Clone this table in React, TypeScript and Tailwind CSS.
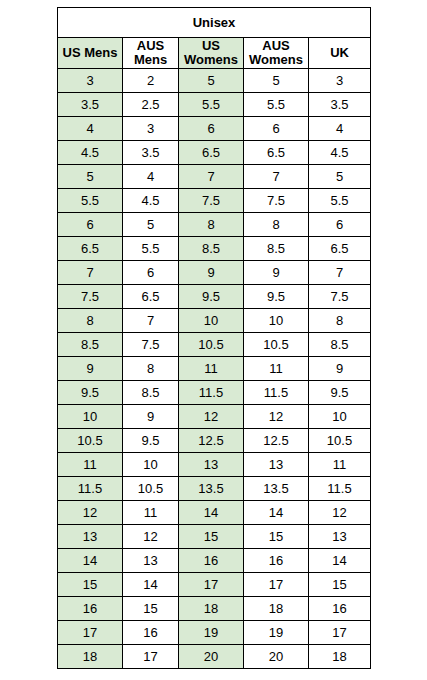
const ROWS: [string, string, string, string, string][] = [
  ["3", "2", "5", "5", "3"],
  ["3.5", "2.5", "5.5", "5.5", "3.5"],
  ["4", "3", "6", "6", "4"],
  ["4.5", "3.5", "6.5", "6.5", "4.5"],
  ["5", "4", "7", "7", "5"],
  ["5.5", "4.5", "7.5", "7.5", "5.5"],
  ["6", "5", "8", "8", "6"],
  ["6.5", "5.5", "8.5", "8.5", "6.5"],
  ["7", "6", "9", "9", "7"],
  ["7.5", "6.5", "9.5", "9.5", "7.5"],
  ["8", "7", "10", "10", "8"],
  ["8.5", "7.5", "10.5", "10.5", "8.5"],
  ["9", "8", "11", "11", "9"],
  ["9.5", "8.5", "11.5", "11.5", "9.5"],
  ["10", "9", "12", "12", "10"],
  ["10.5", "9.5", "12.5", "12.5", "10.5"],
  ["11", "10", "13", "13", "11"],
  ["11.5", "10.5", "13.5", "13.5", "11.5"],
  ["12", "11", "14", "14", "12"],
  ["13", "12", "15", "15", "13"],
  ["14", "13", "16", "16", "14"],
  ["15", "14", "17", "17", "15"],
  ["16", "15", "18", "18", "16"],
  ["17", "16", "19", "19", "17"],
  ["18", "17", "20", "20", "18"],
];

const green = "bg-[#d9ead3]";

export default function App() {
  return (
    <div className="bg-white w-[427px] h-[680px] pt-[7px] pl-[57px] font-['Liberation_Sans',Arial,sans-serif] text-black">
      <table className="table-fixed border-collapse w-[313px] text-[13px] leading-[14px]">
        <colgroup>
          <col className="w-[65px]" />
          <col className="w-[56px]" />
          <col className="w-[65px]" />
          <col className="w-[65px]" />
          <col className="w-[62px]" />
        </colgroup>
        <thead>
          <tr>
            <th colSpan={5} className="border border-black h-[30px] p-0 font-bold text-center">
              Unisex
            </th>
          </tr>
          <tr>
            <th className={`border border-black h-[31px] p-0 font-bold ${green}`}>US Mens</th>
            <th className="border border-black h-[31px] p-0 font-bold">
              AUS
              <br />
              Mens
            </th>
            <th className={`border border-black h-[31px] p-0 font-bold ${green}`}>
              US
              <br />
              Womens
            </th>
            <th className="border border-black h-[31px] p-0 font-bold">
              AUS
              <br />
              Womens
            </th>
            <th className="border border-black h-[31px] p-0 font-bold">UK</th>
          </tr>
        </thead>
        <tbody>
          {ROWS.map((r) => (
            <tr key={r[0]}>
              {r.map((v, i) => (
                <td
                  key={i}
                  className={`border border-black h-[24px] p-0 text-center ${
                    i === 0 || i === 2 ? green : ""
                  }`}
                >
                  {v}
                </td>
              ))}
            </tr>
          ))}
        </tbody>
      </table>
    </div>
  );
}
